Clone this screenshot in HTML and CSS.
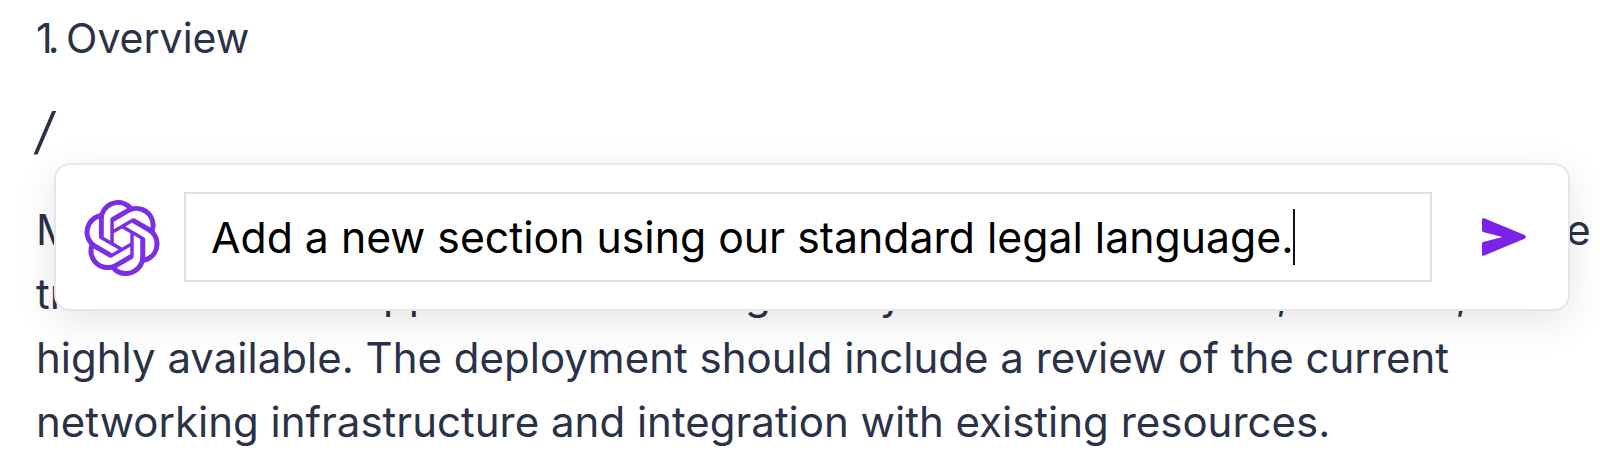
FILE: index.html
```html
<!DOCTYPE html>
<html lang="en">
<head>
<meta charset="utf-8">
<title>Document</title>
<link rel="stylesheet" href="styles.css">
</head>
<body>
<main class="doc">
  <h2 class="heading"><span class="num">1.</span> Overview</h2>
  <p class="slash"><span class="slash-mark">/</span></p>
  <div class="para">
    <span class="line">Microsoft will work with the customer to deploy the new web application in the</span>
    <span class="line">transition of the application and image relay into a safe reliable, resilient,</span>
    <span class="line">highly available. The deployment should include a review of the current</span>
    <span class="line">networking infrastructure and integration with existing resources.</span>
  </div>
</main>
<section class="prompt">
  <svg class="logo" viewBox="0 0 24 24" aria-hidden="true"><path d="M22.2819 9.8211a5.9847 5.9847 0 0 0-.5157-4.9108 6.0462 6.0462 0 0 0-6.5098-2.9A6.0651 6.0651 0 0 0 4.9807 4.1818a5.9847 5.9847 0 0 0-3.9977 2.9 6.0462 6.0462 0 0 0 .7427 7.0966 5.98 5.98 0 0 0 .511 4.9107 6.051 6.051 0 0 0 6.5146 2.9001A5.9847 5.9847 0 0 0 13.2599 24a6.0557 6.0557 0 0 0 5.7718-4.2058 5.9894 5.9894 0 0 0 3.9977-2.9001 6.0557 6.0557 0 0 0-.7475-7.0729zm-9.022 12.6081a4.4755 4.4755 0 0 1-2.8764-1.0408l.1419-.0804 4.7783-2.7582a.7948.7948 0 0 0 .3927-.6813v-6.7369l2.02 1.1686a.071.071 0 0 1 .038.052v5.5826a4.504 4.504 0 0 1-4.4945 4.4944zm-9.6607-4.1254a4.4708 4.4708 0 0 1-.5346-3.0137l.142.0852 4.783 2.7582a.7712.7712 0 0 0 .7806 0l5.8428-3.3685v2.3324a.0804.0804 0 0 1-.0332.0615L9.74 19.9502a4.4992 4.4992 0 0 1-6.1408-1.6464zM2.3408 7.8956a4.485 4.485 0 0 1 2.3655-1.9728V11.6a.7664.7664 0 0 0 .3879.6765l5.8144 3.3543-2.0201 1.1685a.0757.0757 0 0 1-.071 0l-4.8303-2.7865A4.504 4.504 0 0 1 2.3408 7.872zm16.5963 3.8558L13.1038 8.364 15.1192 7.2a.0757.0757 0 0 1 .071 0l4.8303 2.7913a4.4944 4.4944 0 0 1-.6765 8.1042v-5.6772a.79.79 0 0 0-.407-.667zm2.0107-3.0231l-.142-.0852-4.7735-2.7818a.7759.7759 0 0 0-.7854 0L9.409 9.2297V6.8974a.0662.0662 0 0 1 .0284-.0615l4.8303-2.7866a4.4992 4.4992 0 0 1 6.6802 4.66zM8.3065 12.863l-2.02-1.1638a.0804.0804 0 0 1-.038-.0567V6.0742a4.4992 4.4992 0 0 1 7.3757-3.4537l-.142.0805L8.704 5.459a.7948.7948 0 0 0-.3927.6813zm1.0976-2.3654l2.602-1.4998 2.6069 1.4998v2.9994l-2.5974 1.4997-2.6067-1.4997Z"/></svg>
  <div class="field"><span class="field-text">Add a new section using our standard legal language.</span><span class="caret"></span></div>
  <svg class="send" viewBox="0 0 44 38" aria-hidden="true"><path d="M2.2 .3 42.6 17a2 2 0 0 1 0 3.7L2.2 37.6A1.6 1.6 0 0 1 0 36V25.5a1.5 1.5 0 0 1 1-1.4L20.5 19 1 13.9a1.5 1.5 0 0 1-1-1.4V2A1.6 1.6 0 0 1 2.200 .3Z"/></svg>
</section>
</body>
</html>
```
FILE: styles.css
```css
html, body {
  margin: 0;
  padding: 0;
  background: #fff;
  height: 466px;
  overflow: hidden;
}
body {
  position: relative;
  font-family: "Inter", "Liberation Sans", sans-serif;
  color: #2a3148;
}
.doc {
  padding: 12px 0 0 36px;
}
.heading {
  margin: 0;
  font-size: 41px;
  font-weight: 400;
  line-height: 52px;
}
.num {
  letter-spacing: -5px;
}
.slash {
  margin: 36px 0 0;
  font-size: 50px;
  line-height: 63px;
}
.slash-mark {
  display: inline-block;
  transform: skewX(-9deg);
}
.para {
  margin-top: 35px;
}
.line {
  display: block;
  white-space: nowrap;
  font-size: 42px;
  line-height: 64px;
}
.prompt {
  position: absolute;
  left: 54px;
  top: 163px;
  width: 1516px;
  height: 148px;
  box-sizing: border-box;
  display: flex;
  align-items: center;
  padding-left: 28px;
  background: #fff;
  border: 2px solid #e6e6e6;
  border-radius: 16px;
  box-shadow: 0 10px 40px rgba(0, 0, 0, 0.1);
}
.logo {
  margin-top: 2px;
  width: 76px;
  height: 76px;
  fill: #7b2ee6;
  flex: none;
}
.field {
  margin-left: 24px;
  width: 1248px;
  height: 90px;
  box-sizing: border-box;
  flex: none;
  display: flex;
  align-items: center;
  padding-left: 25px;
  border: 2px solid #e0e0e0;
  color: #000;
  font-size: 42.75px;
}
.field-text {
  white-space: nowrap;
}
.caret {
  width: 2px;
  height: 56px;
  background: #111;
  flex: none;
}
.send {
  margin-left: 50px;
  width: 44px;
  height: 38px;
  fill: #7a22e8;
  flex: none;
}
```
